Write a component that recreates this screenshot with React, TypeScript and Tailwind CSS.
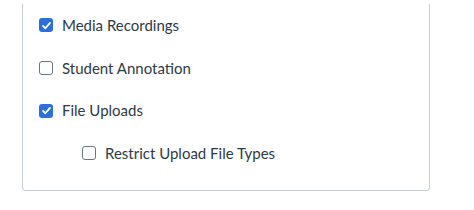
function Check({ checked }: { checked: boolean }) {
  return checked ? (
    <span className="flex h-[14px] w-[14px] shrink-0 items-center justify-center rounded-[3px] bg-[#2b6fdf]">
      <svg viewBox="0 0 12 12" className="h-[11px] w-[11px]" fill="none">
        <path d="M2.2 6.4 4.8 9 9.8 3.2" stroke="white" strokeWidth="2" strokeLinecap="round" strokeLinejoin="round" />
      </svg>
    </span>
  ) : (
    <span className="h-[14px] w-[14px] shrink-0 rounded-[3px] border-[1.5px] border-[#6b7780] bg-white" />
  )
}

function Row({ label, checked, indent }: { label: string; checked: boolean; indent?: boolean }) {
  return (
    <div className={`flex h-[42.7px] items-center gap-[9px] ${indent ? 'pl-[59px]' : 'pl-[16px]'}`}>
      <Check checked={checked} />
      <span className="text-[15px] text-[#2d3b45]">{label}</span>
    </div>
  )
}

export default function App() {
  return (
    <div className="h-[210px] w-[474px] bg-white pt-[4px]" style={{ fontFamily: 'Lato, sans-serif' }}>
      <div className="ml-[22px] w-[408px] rounded-b-[4px] border-x border-b border-[#c7cdd1] pb-[15px]">
        <Row label="Media Recordings" checked />
        <Row label="Student Annotation" checked={false} />
        <Row label="File Uploads" checked />
        <Row label="Restrict Upload File Types" checked={false} indent />
      </div>
    </div>
  )
}
